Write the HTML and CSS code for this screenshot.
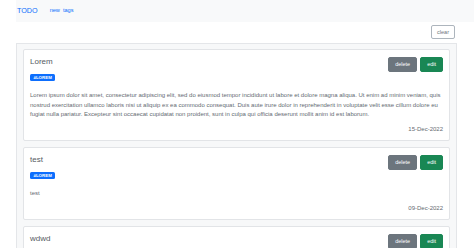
FILE: index.html
```html
<!DOCTYPE html>
<html lang="en">
<head>
<meta charset="utf-8">
<title>TODO</title>
<link rel="stylesheet" href="styles.css">
</head>
<body>
<nav class="navbar">
  <a class="brand" href="#">TODO</a>
  <a class="nav-link first" href="#">new</a>
  <a class="nav-link" href="#">tags</a>
</nav>
<main class="container">
  <div class="toolbar">
    <button class="btn btn-outline">clear</button>
  </div>
  <section class="list">
    <article class="card">
      <div class="card-head">
        <div class="card-info">
          <h5 class="card-title">Lorem</h5>
          <span class="badge">#LOREM</span>
        </div>
        <div class="actions">
          <button class="btn btn-secondary">delete</button>
          <button class="btn btn-success">edit</button>
        </div>
      </div>
      <p class="card-text">Lorem ipsum dolor sit amet, consectetur adipiscing elit, sed do eiusmod tempor incididunt ut labore et dolore magna aliqua. Ut enim ad minim veniam, quis nostrud exercitation ullamco laboris nisi ut aliquip ex ea commodo consequat. Duis aute irure dolor in reprehenderit in voluptate velit esse cillum dolore eu fugiat nulla pariatur. Excepteur sint occaecat cupidatat non proident, sunt in culpa qui officia deserunt mollit anim id est laborum.</p>
      <div class="card-date">15-Dec-2022</div>
    </article>
    <article class="card">
      <div class="card-head">
        <div class="card-info">
          <h5 class="card-title">test</h5>
          <span class="badge">#LOREM</span>
        </div>
        <div class="actions">
          <button class="btn btn-secondary">delete</button>
          <button class="btn btn-success">edit</button>
        </div>
      </div>
      <p class="card-text">test</p>
      <div class="card-date">09-Dec-2022</div>
    </article>
    <article class="card">
      <div class="card-head">
        <div class="card-info">
          <h5 class="card-title">wdwd</h5>
          <span class="badge">#LOREM</span>
        </div>
        <div class="actions">
          <button class="btn btn-secondary">delete</button>
          <button class="btn btn-success">edit</button>
        </div>
      </div>
      <p class="card-text">wdwd</p>
      <div class="card-date">08-Dec-2022</div>
    </article>
  </section>
</main>
</body>
</html>
```

FILE: styles.css
```css
* {
  box-sizing: border-box;
}

html, body {
  margin: 0;
  padding: 0;
  background: #ffffff;
  font-family: "Liberation Sans", Arial, sans-serif;
  color: #212529;
}

.navbar {
  margin-left: 16px;
  height: 22px;
  background: #f8f9fa;
  display: flex;
  align-items: center;
  padding: 0 0 2px 1px;
}

.brand {
  font-size: 7.2px;
  color: #0d6efd;
  text-decoration: none;
  margin-right: 12px;
}

.nav-link {
  font-size: 5.6px;
  color: #0d6efd;
  text-decoration: none;
  margin-right: 3px;
}

.container {
  margin: 0 17px 0 16px;
}

.toolbar {
  display: flex;
  justify-content: flex-end;
  padding: 3px 2px 4px 0;
}

.btn {
  font-family: "Liberation Sans", Arial, sans-serif;
  font-size: 5.5px;
  height: 15px;
  padding: 0 6px;
  border-radius: 2px;
  border: 1px solid transparent;
  color: #ffffff;
  line-height: 13px;
  cursor: pointer;
}

.btn-outline {
  height: 14px;
  padding: 0 5px;
  background: #ffffff;
  color: #6c757d;
  border-color: #adb5bd;
  line-height: 12px;
}

.btn-secondary {
  background: #6c757d;
  border-color: #6c757d;
}

.btn-success {
  background: #198754;
  border-color: #198754;
}

.list {
  border: 1px solid #e4e6e9;
  border-bottom: none;
  background: #f7f8f9;
  padding: 5px 6px 0 6px;
  display: flex;
  flex-direction: column;
  gap: 6px;
}

.card {
  background: #ffffff;
  border: 1px solid #e2e4e7;
  border-radius: 2px;
  padding: 7px 6px 6px 6px;
}

.card-head {
  display: flex;
  justify-content: space-between;
  align-items: flex-start;
}

.card-info {
  display: flex;
  flex-direction: column;
  align-items: flex-start;
}

.card-title {
  margin: 0;
  font-size: 8px;
  line-height: 10px;
  font-weight: normal;
  color: #555b62;
}

.badge {
  margin-top: 7px;
  display: inline-block;
  height: 7px;
  line-height: 7px;
  padding: 0 3.5px;
  background: #0d6efd;
  color: #ffffff;
  font-size: 4.4px;
  font-weight: bold;
  border-radius: 1.5px;
}

.actions {
  display: flex;
  gap: 3px;
}

.card-text {
  margin: 10px 0 5px 0;
  font-size: 6px;
  line-height: 9.5px;
  color: #656b72;
}

.card-date {
  text-align: right;
  font-size: 6px;
  line-height: 9.5px;
  color: #656b72;
}
```
